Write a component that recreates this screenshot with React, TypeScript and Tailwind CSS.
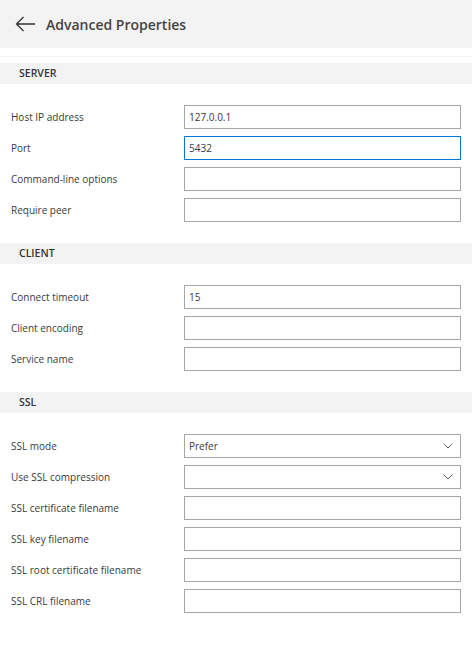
import React from "react";

const font = { fontFamily: '"Open Sans", "Noto Sans", sans-serif' };

function Input({ value, focused, select }: { value?: string; focused?: boolean; select?: boolean }) {
  return (
    <div
      className={`relative flex h-[24px] w-[277px] items-center border bg-white pl-[4px] text-[10px] text-[#3a3a3a] ${
        focused ? "border-[#0078d4]" : "border-[#a6a6a6]"
      }`}
    >
      <span>{value}</span>
      {select && (
        <svg className="absolute right-[7px] top-[8px]" width="10" height="6" viewBox="0 0 10 6" fill="none">
          <path d="M0.5 0.5 L5 5 L9.5 0.5" stroke="#666" strokeWidth="1" />
        </svg>
      )}
    </div>
  );
}

type Row = { label: string; value?: string; focused?: boolean; select?: boolean };

function Section({ title, rows }: { title: string; rows: Row[] }) {
  return (
    <div>
      <div className="flex h-[21px] items-center bg-[#f3f3f3] pl-[19px] text-[10.5px] font-semibold text-[#333]">
        {title}
      </div>
      <div className="flex flex-col gap-[7px] py-[21px]">
        {rows.map((r) => (
          <div key={r.label} className="flex h-[24px] items-center">
            <div className="w-[184px] pl-[11px] text-[10px] text-[#3a3a3a]">{r.label}</div>
            <Input value={r.value} focused={r.focused} select={r.select} />
          </div>
        ))}
      </div>
    </div>
  );
}

export default function App() {
  return (
    <div className="h-[656px] w-[474px] bg-white" style={font}>
      <div className="w-[472px]">
        <div className="flex h-[48px] items-center bg-[#f3f3f3]">
          <svg className="ml-[15px]" width="21" height="16" viewBox="0 0 21 16" fill="none">
            <path d="M20 8 H1.5 M8.5 1 L1.5 8 L8.5 15" stroke="#333" strokeWidth="1.3" />
          </svg>
          <span className="ml-[10px] text-[14px] font-semibold text-[#444]">Advanced Properties</span>
        </div>
        <div className="mt-[8px] h-px bg-[#f6f6f6]" />
        <div className="mt-[6px]">
          <Section
            title="SERVER"
            rows={[
              { label: "Host IP address", value: "127.0.0.1" },
              { label: "Port", value: "5432", focused: true },
              { label: "Command-line options" },
              { label: "Require peer" },
            ]}
          />
          <Section
            title="CLIENT"
            rows={[
              { label: "Connect timeout", value: "15" },
              { label: "Client encoding" },
              { label: "Service name" },
            ]}
          />
          <Section
            title="SSL"
            rows={[
              { label: "SSL mode", value: "Prefer", select: true },
              { label: "Use SSL compression", select: true },
              { label: "SSL certificate filename" },
              { label: "SSL key filename" },
              { label: "SSL root certificate filename" },
              { label: "SSL CRL filename" },
            ]}
          />
        </div>
      </div>
    </div>
  );
}
